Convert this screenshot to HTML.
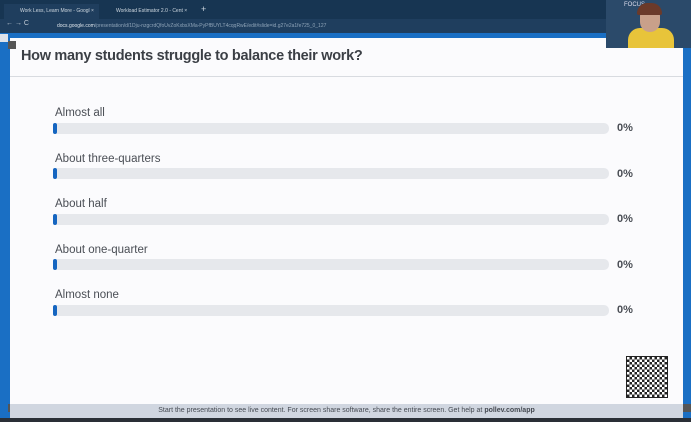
<!DOCTYPE html>
<html><head><style>
*{margin:0;padding:0;box-sizing:border-box}
body{width:691px;height:422px;overflow:hidden;background:#1a6fc4;font-family:"Liberation Sans",sans-serif;position:relative}
.tabs{position:absolute;left:0;top:0;width:691px;height:19px;background:#173552}
.tab{position:absolute;top:4px;height:15px;font-size:5px;color:#cfd8e0;padding:4px 0 0 16px}
.addr{position:absolute;left:0;top:19px;width:691px;height:14px;background:#1f3e5e}
.url{position:absolute;left:42px;top:21px;width:500px;height:10px;font-size:5px;color:#8fa4b8;padding:2px 0 0 15px}
.slide{position:absolute;left:10px;top:38px;width:673px;height:366px;background:#fbfbfd}
h1{position:absolute;left:21px;top:48px;font-size:14.5px;font-weight:bold;color:#3b3f45;letter-spacing:-0.3px}
.hr{position:absolute;left:10px;top:76px;width:673px;height:1px;background:#d8dbe0}
.lbl{position:absolute;left:55px;font-size:11.5px;color:#4a4e55}
.bar{position:absolute;left:53px;width:556px;height:11px;background:#e6e8ec;border-radius:5px}
.bar i{position:absolute;left:0;top:0;width:4px;height:11px;background:#1565c0;border-radius:2px}
.pct{position:absolute;left:617px;font-size:11px;font-weight:bold;color:#4a4e55}
.foot{position:absolute;left:10px;top:404px;width:673px;height:14px;background:#d0d6e0;font-size:7px;color:#454a52;text-align:center;padding-top:3px}
.bot{position:absolute;left:0;top:418px;width:691px;height:4px;background:#2a2f36}
.cam{position:absolute;left:606px;top:0;width:85px;height:48px;background:#2b4a6a}
.qr{position:absolute;left:626px;top:356px;width:42px;height:42px;background:repeating-conic-gradient(#222 0 25%,#fff 0 50%) 0 0/5px 5px;border:1px solid #222}
.sq{position:absolute;width:8px;height:8px}
</style></head><body>
<div class="tabs">
<div class="tab" style="left:4px;width:95px;background:#1f3e5e">Work Less, Learn More - Googl ×</div>
<div class="tab" style="left:100px;width:95px">Workload Estimator 2.0 - Cent ×</div>
<div style="position:absolute;left:201px;top:4px;color:#cfd8e0;font-size:9px">+</div>
</div>
<div class="addr"></div>
<div style="position:absolute;left:6px;top:20px;color:#c0cad4;font-size:7px">← → C</div>
<div class="url"><span style="color:#dfe6ec">docs.google.com</span>/presentation/d/1Dju-nzgcrdQfoUvZoKxbsXMa-PyPfBUYLT4cqqRwE/edit#slide=id.g27e2a1fe725_0_127</div>
<div class="slide"></div>
<div class="sq" style="left:0;top:34px;background:#dfe3ea"></div>
<div class="sq" style="left:8px;top:41px;background:#555"></div>
<div class="sq" style="left:8px;top:404px;background:#555"></div>
<div class="sq" style="left:683px;top:404px;background:#555"></div>
<h1>How many students struggle to balance their work?</h1>
<div class="hr"></div>
<div class="lbl" style="top:107px">Almost all</div><div class="bar" style="top:123px"><i></i></div><div class="pct" style="top:122px">0%</div>
<div class="lbl" style="top:153px">About three-quarters</div><div class="bar" style="top:168px"><i></i></div><div class="pct" style="top:168px">0%</div>
<div class="lbl" style="top:198px">About half</div><div class="bar" style="top:214px"><i></i></div><div class="pct" style="top:213px">0%</div>
<div class="lbl" style="top:244px">About one-quarter</div><div class="bar" style="top:259px"><i></i></div><div class="pct" style="top:259px">0%</div>
<div class="lbl" style="top:289px">Almost none</div><div class="bar" style="top:305px"><i></i></div><div class="pct" style="top:304px">0%</div>
<div class="qr"></div>
<div class="foot">Start the presentation to see live content. For screen share software, share the entire screen. Get help at <b>pollev.com/app</b></div>
<div class="bot"></div>
<div class="cam">
<div style="position:absolute;left:18px;top:2px;font-size:6px;color:#dde">FOCUS</div>
<div style="position:absolute;left:22px;top:28px;width:46px;height:20px;background:#e8c43a;border-radius:12px 12px 0 0"></div>
<div style="position:absolute;left:34px;top:6px;width:20px;height:26px;background:#c9a08a;border-radius:10px"></div>
<div style="position:absolute;left:31px;top:3px;width:25px;height:12px;background:#6b3a2a;border-radius:12px 12px 2px 2px"></div>
</div>
</body></html>
